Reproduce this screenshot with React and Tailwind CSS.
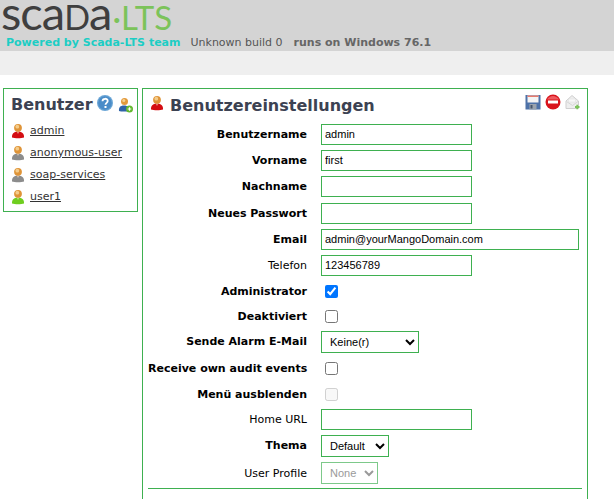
const users = [
  { name: "admin", color: "#d40d12" },
  { name: "anonymous-user", color: "#8c8c8c" },
  { name: "soap-services", color: "#8c8c8c" },
  { name: "user1", color: "#6fce1f" },
]

function UserIcon({ color = "#d40d12" }) {
  return (
    <svg width="16" height="16" viewBox="0 0 16 16">
      <path d="M2 14.500c-.4-3.400 1.800-6 6-6s6.400 2.600 6 6c-2.500 1-9.500 1-12 0z" fill={color} />
      <path d="M6.500 8.500l1.500 2.500 1.500-2.500z" fill="#f3d9c2" opacity="0.6" />
      <circle cx="8" cy="4.800" r="3.900" fill="#df9438" />
      <circle cx="7.300" cy="3.700" r="1.900" fill="#f4cc8b" />
    </svg>
  )
}

function AddUserIcon() {
  return (
    <svg width="16" height="16" viewBox="0 0 16 16">
      <path d="M1 14c-.4-3.300 1-5.500 5-5.500s5.500 2.200 5 5.500c-2 .8-8 .8-10 0z" fill="#2f63a8" />
      <circle cx="6.500" cy="4.500" r="3.500" fill="#e39a3c" />
      <circle cx="5.800" cy="3.500" r="1.500" fill="#f6d193" />
      <circle cx="11.500" cy="12" r="3.500" fill="#63b82f" />
      <path d="M9.700 12h3.600M11.500 10.200v3.600" stroke="#fff" strokeWidth="1.200" />
    </svg>
  )
}

function HelpIcon() {
  return (
    <svg width="16" height="16" viewBox="0 0 16 16">
      <circle cx="8" cy="8" r="8" fill="#6ba6d6" />
      <circle cx="8" cy="8" r="6.800" fill="#4a8cc8" />
      <path d="M5.500 6.200c0-3.200 5.200-3.200 5.200-.2 0 1.800-2.200 1.900-2.200 3.700" fill="none" stroke="#fff" strokeWidth="1.800" />
      <rect x="7.500" y="11" width="2" height="2" fill="#fff" />
    </svg>
  )
}

function SaveIcon() {
  return (
    <svg width="16" height="16" viewBox="0 0 16 16">
      <rect x="0.500" y="1" width="15" height="14.500" fill="#4e72a8" />
      <rect x="2.500" y="1.500" width="11" height="7" fill="#f4f4f4" />
      <rect x="2.500" y="1.500" width="11" height="1.500" fill="#e87b6d" />
      <rect x="4.500" y="10" width="7" height="5.500" fill="#9aa3ad" />
      <rect x="5.500" y="11" width="2" height="3.500" fill="#46566c" />
    </svg>
  )
}

function StopIcon() {
  return (
    <svg width="16" height="16" viewBox="0 0 16 16">
      <circle cx="8" cy="8" r="7.500" fill="#d9141c" />
      <path d="M2 5.500a7 7 0 0 1 12 0z" fill="#ee5a5f" />
      <rect x="3" y="6.500" width="10" height="3" fill="#fff" />
    </svg>
  )
}

function MailIcon() {
  return (
    <svg width="16" height="16" viewBox="0 0 16 16">
      <path d="M1 7l6-5.500L13.500 7v7.500H1z" fill="#eeeeee" stroke="#cfcfcf" />
      <path d="M1.500 7.500l6 4 5.500-4" fill="none" stroke="#d6d6d6" />
      <rect x="3.500" y="5" width="7" height="3" fill="#f7f7f7" stroke="#dddddd" strokeWidth="0.500" />
      <path d="M10 13h4.500M12.250 10.750v4.500" stroke="#7cc35a" strokeWidth="1.800" />
    </svg>
  )
}

function Row({ label, bold, className = "", children }) {
  return (
    <div className={`flex items-center ${className}`}>
      <div className={`w-[159px] shrink-0 whitespace-nowrap text-right text-[11px] leading-none text-black ${bold ? "font-bold" : ""}`}>
        {label}
      </div>
      <div className="ml-[14px] flex items-center">{children}</div>
    </div>
  )
}

function TextBox({ value = "", wide }) {
  return (
    <input
      type="text"
      defaultValue={value}
      className={`h-[21px] border border-[#3eb050] bg-white px-[3px] font-['Liberation_Sans',sans-serif] text-[11px] text-black outline-none ${wide ? "w-[258px]" : "w-[151px]"}`}
    />
  )
}

function Check({ checked, disabled }) {
  return (
    <input
      type="checkbox"
      defaultChecked={checked}
      disabled={disabled}
      className="ml-[4px] h-[13px] w-[13px] accent-[#0075ff]"
    />
  )
}

function Select({ value, width, disabled }) {
  return (
    <select
      defaultValue={value}
      disabled={disabled}
      className={`h-[22px] ${width} border bg-white pl-[4px] font-['Liberation_Sans',sans-serif] text-[11px] outline-none ${disabled ? "border-[#7dc98a] text-[#9a9a9a]" : "border-[#3eb050] text-black"}`}
    >
      <option>{value}</option>
    </select>
  )
}

export default function App() {
  return (
    <div className="h-[499px] overflow-hidden bg-white font-['DejaVu_Sans',Verdana,sans-serif]">
      <header className="h-[51px] bg-[#d4d4d4] pl-[1px]">
        <div className="flex h-[33px] items-baseline whitespace-nowrap font-['Lato',sans-serif] leading-[24px]">
          <span className="text-[47px] tracking-[-1px] text-[#3f3f3f]">sca</span>
          <span className="text-[34px] tracking-[-1px] text-[#3f3f3f]">D</span>
          <span className="text-[47px] text-[#3f3f3f]">a</span>
          <span className="text-[33px] text-[#7cc35a]">·LTS</span>
        </div>
        <div className="flex h-[18px] items-center pt-[2px] pl-[5px] text-[11px] text-[#555]">
          <span className="font-bold text-[#1ccdc4]">Powered by Scada-LTS team</span>
          <span className="ml-[10px]">Unknown build 0</span>
          <span className="ml-[11px] font-bold text-[#666]">runs on Windows 76.1</span>
        </div>
      </header>
      <div className="h-[24px] bg-[#efefef]" />

      <div className="mt-[13px] flex items-start gap-[4px] pl-[3px]">
        <aside className="h-[124px] w-[135px] shrink-0 border border-[#3eb050] px-[6px] pt-[4px]">
          <div className="flex items-center pl-[1px]">
            <h2 className="text-[16px] leading-[24px] font-bold text-[#3c4252]">Benutzer</h2>
            <span className="mb-[4px] ml-[4px]"><HelpIcon /></span>
            <span className="mb-[1px] ml-[5px]"><AddUserIcon /></span>
          </div>
          <ul className="mt-[3px]">
            {users.map((u) => (
              <li key={u.name} className="flex h-[22px] items-center">
                <UserIcon color={u.color} />
                <a href="#" className="ml-[4px] text-[11px] text-[#333] underline">
                  {u.name}
                </a>
              </li>
            ))}
          </ul>
        </aside>

        <section className="h-[460px] w-[446px] shrink-0 border border-[#3eb050] px-[5px] pt-[5px]">
          <div className="flex h-[24px] items-center">
            <span className="mb-[7px] ml-[1px]"><UserIcon /></span>
            <h2 className="ml-[5px] text-[16px] leading-[24px] font-bold text-[#3c4252]">Benutzereinstellungen</h2>
            <div className="mr-[1px] mb-[8px] ml-auto flex gap-[4px]">
              <SaveIcon />
              <StopIcon />
              <MailIcon />
            </div>
          </div>

          <div className="mt-[3px]">
            <Row label="Benutzername" bold className="h-[26px]"><TextBox value="admin" /></Row>
            <Row label="Vorname" bold className="h-[26px]"><TextBox value="first" /></Row>
            <Row label="Nachname" bold className="h-[27px]"><TextBox /></Row>
            <Row label="Neues Passwort" bold className="h-[26px]"><TextBox /></Row>
            <Row label="Email" bold className="h-[26px]"><TextBox value="admin@yourMangoDomain.com" wide /></Row>
            <Row label="Telefon" className="h-[26px]"><TextBox value="123456789" /></Row>
            <Row label="Administrator" bold className="h-[26px]"><Check checked /></Row>
            <Row label="Deaktiviert" bold className="h-[24px]"><Check /></Row>
            <Row label="Sende Alarm E-Mail" bold className="h-[27px]"><Select value="Keine(r)" width="w-[98px]" /></Row>
            <Row label="Receive own audit events" bold className="h-[27px]"><Check /></Row>
            <Row label="Menü ausblenden" bold className="h-[25px]"><Check disabled /></Row>
            <Row label="Home URL" className="h-[25px]"><TextBox /></Row>
            <Row label="Thema" bold className="h-[27px]"><Select value="Default" width="w-[68px]" /></Row>
            <Row label="User Profile" className="h-[28px]"><Select value="None" width="w-[57px]" disabled /></Row>
          </div>

          <div className="mt-[1px] h-px bg-[#3eb050]" />
          <div className="mt-[7px] flex">
            <div className="ml-[173px]"><Check /></div>
          </div>
        </section>
      </div>
    </div>
  )
}
